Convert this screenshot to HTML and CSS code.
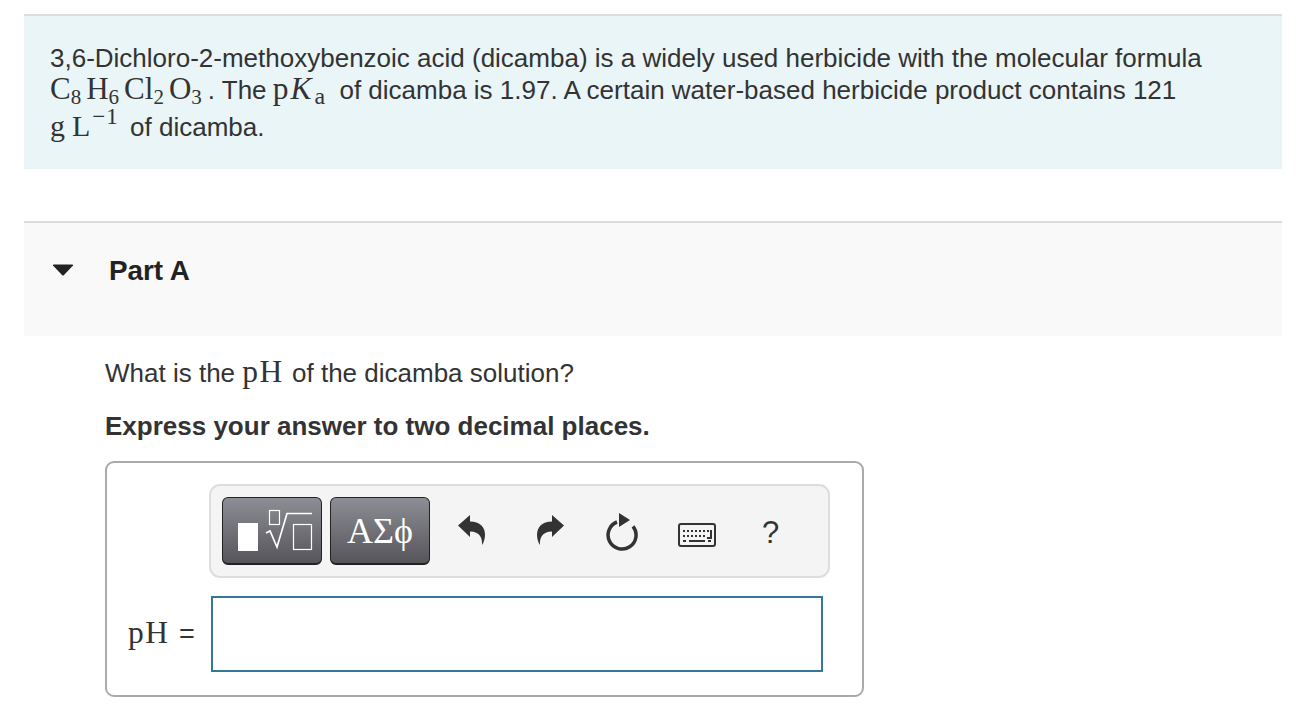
FILE: index.html
```html
<!DOCTYPE html>
<html lang="en">
<head>
<meta charset="utf-8">
<title>Part A</title>
<link rel="stylesheet" href="styles.css">
</head>
<body>
<main class="page">
  <section class="intro">
    <p class="intro-line">3,6-Dichloro-2-methoxybenzoic acid (dicamba) is a widely used herbicide with the molecular formula</p>
    <p class="intro-line"><span class="m formula">C<sub>8</sub>H<sub>6</sub>Cl<sub>2</sub>O<sub>3</sub></span><span class="dot">.</span> The <span class="m pka">p<i>K</i><sub>a</sub></span> of dicamba is 1.97. A certain water-based herbicide product contains 121</p>
    <p class="intro-line line-3"><span class="m unit"><span class="unit-g">g</span>L<sup>−1</sup></span> of dicamba.</p>
  </section>
  <section class="part-head">
    <svg class="caret" width="22" height="12" viewBox="0 0 22 12"><path d="M1 1.5Q0.5 0.5 2 0.5H20Q21.5 0.5 21 1.5L12 11Q11 12 10 11Z" fill="#222"/></svg>
    <h2 class="part-title">Part A</h2>
  </section>
  <section class="question">
    <p class="q-text">What is the <span class="m ph">pH</span> of the dicamba solution?</p>
    <p class="q-bold">Express your answer to two decimal places.</p>
    <div class="answer">
      <div class="toolbar">
        <button class="tool tool-math" type="button" aria-label="Templates">
          <svg width="98" height="65" viewBox="0 0 98 65">
            <rect x="15" y="25" width="20" height="28" fill="#fff"/>
            <rect x="46.500" y="12.500" width="10" height="14" fill="none" stroke="#fff" stroke-width="1.200"/>
            <path d="M43 35L47 33L54 49L64 15.500H89" fill="none" stroke="#fff" stroke-width="1.700"/>
            <rect x="70.500" y="26.500" width="18" height="25" fill="none" stroke="#fff" stroke-width="1.200"/>
          </svg>
        </button>
        <button class="tool tool-greek" type="button">ΑΣϕ</button>
        <span class="icons">
          <svg class="ic ic-undo" width="28" height="32" viewBox="0 0 28 32"><path d="M0 11.500L12 1V7.500C22 7.500 27 13 27 21C27 25 25.500 29 24 31C24.500 24 22 17.500 12 17.500V23Z" fill="#333"/></svg>
          <svg class="ic ic-redo" width="28" height="32" viewBox="0 0 28 32"><path d="M28 11.500L16 1V7.500C6 7.500 1 13 1 21C1 25 2.500 29 4 31C3.500 24 6 17.500 16 17.500V23Z" fill="#333"/></svg>
          <svg class="ic ic-reset" width="34" height="38" viewBox="0 0 34 38"><path d="M12 9A14 14 0 1 0 28 13.300" fill="none" stroke="#333" stroke-width="3.500"/><path d="M14 0L25 7L14 14Z" fill="#333"/></svg>
          <svg class="ic ic-keys" width="38" height="24" viewBox="0 0 38 24">
            <rect x="1" y="1" width="36" height="22" rx="2" fill="none" stroke="#333" stroke-width="2"/>
            <path d="M5 8h26M5 13h23" fill="none" stroke="#333" stroke-width="2" stroke-dasharray="2 2"/>
            <path d="M33 7v8H29M11 18h16M5 18h3M30 18h3" fill="none" stroke="#333" stroke-width="2"/>
          </svg>
          <span class="help">?</span>
        </span>
      </div>
      <div class="entry">
        <label class="entry-label" for="ans"><span class="m ph">pH</span> =</label>
        <input class="entry-input" id="ans" type="text">
      </div>
    </div>
  </section>
</main>
</body>
</html>
```

FILE: styles.css
```css
* { box-sizing: border-box; }
html, body { margin: 0; padding: 0; background: #fff; }
body { font-family: "Liberation Sans", Arial, sans-serif; color: #333; overflow: hidden; height: 712px; }
p, h2 { margin: 0; }
.page { padding: 14px 24px 0; }
.m { font-family: "Liberation Serif", "Times New Roman", serif; font-size: 30px; line-height: 0; }
.intro { height: 155px; background: #e9f5f7; border-top: 2px solid #ddd; padding: 26px 26px 0; }
.intro-line { font-size: 26px; line-height: 32px; white-space: nowrap; }
.line-3 { margin-top: 5px; }
.intro sub, .intro sup { font-size: 21px; line-height: 0; }
.intro sub { vertical-align: -5px; }
.formula { font-size: 31px; }
.formula sub { margin-right: 4px; letter-spacing: 1px; }
.formula sub:last-child { margin-right: 0; }
.dot { margin-left: 5px; }
.pka { font-size: 31.500px; letter-spacing: 2px; margin: 0 5px 0 -1px; }
.pka sub { font-size: 24px; margin-left: 1px; }
.unit-g { margin-right: 7px; }
.unit sup { font-size: 23px; vertical-align: 12px; letter-spacing: 1px; margin-left: 2px; }
.unit { margin-right: 4px; }
.part-head { margin-top: 52px; height: 115px; background: #f9f9f9; border-top: 2px solid #ddd; display: flex; align-items: flex-start; padding: 41px 0 0 28px; }
.part-title { font-size: 27.800px; line-height: 30px; font-weight: 700; color: #222; margin: -8px 0 0 35px; }
.question { padding: 19px 0 0 81px; }
.ph { font-size: 31.500px; letter-spacing: 1.500px; }
.q-text { font-size: 26px; line-height: 36px; }
.q-text .ph { margin-right: 1px; }
.q-bold { font-size: 26px; line-height: 36px; font-weight: 700; margin-top: 17px; }
.answer { margin-top: 17px; width: 759px; height: 236px; border: 2px solid #aaa; border-radius: 9px; padding: 21px 0 0 102px; }
.toolbar { width: 621px; height: 94px; background: #f4f4f4; border: 2px solid #ddd; border-radius: 11px; display: flex; align-items: flex-start; padding: 11px 0 0 11px; gap: 8px; }
.tool { width: 100px; height: 68px; padding: 0; border: 1px solid #222; border-bottom-width: 2px; border-radius: 6px; background: linear-gradient(#8d8d95, #55555a); color: #fff; display: flex; align-items: center; justify-content: center; }
.tool-greek { font-family: "Liberation Serif", serif; font-size: 36px; }
.icons { position: relative; flex: 1; height: 68px; }
.ic, .help { position: absolute; }
.ic-undo { left: 20px; top: 17px; }
.ic-redo { left: 98px; top: 17px; }
.ic-reset { left: 167px; top: 16px; }
.ic-keys { left: 240px; top: 26px; }
.help { left: 324px; top: 18px; font-size: 31px; line-height: 36px; }
.entry { display: flex; align-items: center; margin-top: 18px; margin-left: -81px; gap: 15px; }
.entry-label { width: 68px; padding-right: 2px; text-align: right; font-size: 27px; white-space: nowrap; }
.entry-label .ph { margin-right: 2px; }
.entry-input { width: 612px; height: 76px; border: 2px solid #337799; background: #fff; outline: none; }
```
